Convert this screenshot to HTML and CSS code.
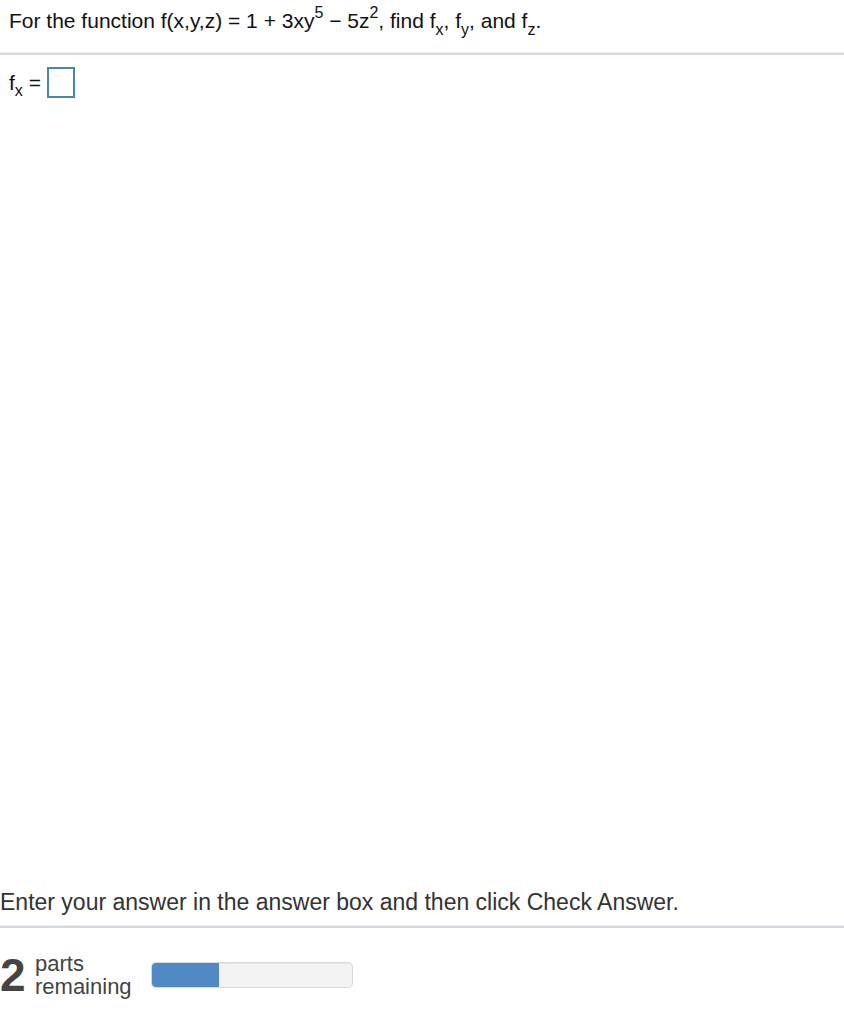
FILE: index.html
```html
<!DOCTYPE html>
<html>
<head>
<meta charset="utf-8">
<link rel="stylesheet" href="styles.css">
</head>
<body>
<div class="page">
  <div class="question">For the function f(x,y,z) = 1 + 3xy<sup>5</sup> &minus; 5z<sup>2</sup>, find f<sub>x</sub>, f<sub>y</sub>, and f<sub>z</sub>.</div>
  <div class="divider"></div>
  <div class="answer-area">
    <div class="answer-row">
      <span class="lhs">f<sub>x</sub> =</span>
      <span class="answer-box"></span>
    </div>
  </div>
  <div class="instructions">Enter your answer in the answer box and then click Check Answer.</div>
  <div class="divider"></div>
  <div class="footer">
    <div class="count">2</div>
    <div class="count-label">parts<br>remaining</div>
    <div class="progress"><div class="progress-fill" style="width:33.7%"></div></div>
  </div>
</div>
</body>
</html>
```
FILE: styles.css
```css
html, body {
  margin: 0;
  padding: 0;
  background: #fff;
}
body {
  font-family: "Liberation Sans", Arial, sans-serif;
  color: #111;
}
.page {
  width: 844px;
}
.question {
  padding: 8px 0 0 9px;
  height: 52px;
  font-size: 21px;
  line-height: 26px;
  color: #111;
  box-sizing: border-box;
}
.question sup {
  font-size: 16px;
  line-height: 0;
  vertical-align: 10px;
}
.question sub {
  font-size: 16px;
  line-height: 0;
  vertical-align: -7px;
}
.divider {
  height: 2px;
  background: #d3d8e0;
  border-top: 1px solid #e8ebf0;
}
.answer-area {
  height: 834px;
  padding: 12px 0 0 9px;
  box-sizing: border-box;
}
.answer-row {
  display: flex;
  align-items: center;
  gap: 6px;
}
.lhs {
  font-size: 21px;
  line-height: 24px;
}
.lhs sub {
  font-size: 16px;
  line-height: 0;
  vertical-align: -6px;
}
.answer-box {
  display: inline-block;
  width: 24px;
  height: 27px;
  border: 2px solid #4b88a6;
}
.instructions {
  font-size: 23px;
  line-height: 27px;
  color: #333;
  padding: 0 0 9px 0;
}
.footer {
  display: flex;
  align-items: center;
  height: 94px;
}
.count {
  font-size: 46px;
  font-weight: bold;
  color: #444;
  line-height: 44px;
  width: 35px;
}
.count-label {
  font-size: 22px;
  line-height: 23px;
  color: #444;
  width: 116px;
}
.progress {
  width: 200px;
  height: 24px;
  border: 1px solid #d8d8d8;
  border-radius: 5px;
  background: #f3f3f3;
  overflow: hidden;
  box-shadow: inset 0 1px 1px rgba(0,0,0,0.06);
}
.progress-fill {
  height: 100%;
  background: #5189c4;
}
```
